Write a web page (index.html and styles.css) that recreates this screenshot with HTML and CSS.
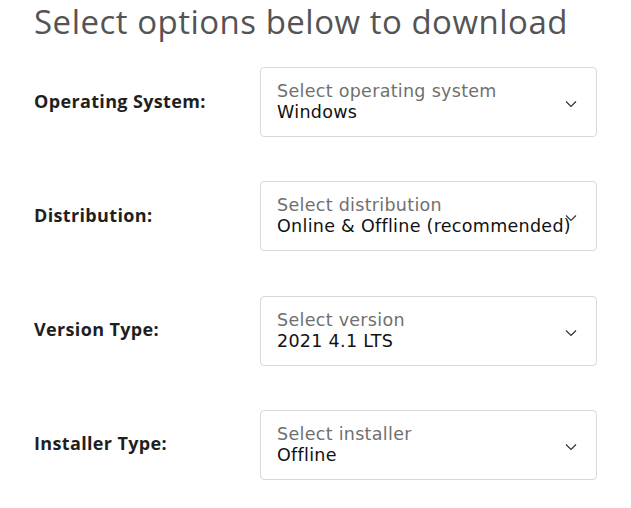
FILE: index.html
```html
<!DOCTYPE html>
<html lang="en">
<head>
<meta charset="utf-8">
<title>Select options</title>
<link rel="stylesheet" href="styles.css">
</head>
<body>
<div class="page">
  <h1 class="title">Select options below to download</h1>
  <div class="form">
    <div class="row">
      <div class="label">Operating System:</div>
      <div class="select">
        <div class="texts">
          <span class="ph">Select operating system</span>
          <span class="val">Windows</span>
        </div>
        <svg class="chev" width="12" height="8" viewBox="0 0 12 8"><path d="M1 1.5 L6 6.5 L11 1.5" fill="none" stroke="#333" stroke-width="1.2"/></svg>
      </div>
    </div>
    <div class="row">
      <div class="label">Distribution:</div>
      <div class="select">
        <div class="texts">
          <span class="ph">Select distribution</span>
          <span class="val">Online &amp; Offline (recommended)</span>
        </div>
        <svg class="chev" width="12" height="8" viewBox="0 0 12 8"><path d="M1 1.5 L6 6.5 L11 1.5" fill="none" stroke="#333" stroke-width="1.2"/></svg>
      </div>
    </div>
    <div class="row">
      <div class="label">Version Type:</div>
      <div class="select">
        <div class="texts">
          <span class="ph">Select version</span>
          <span class="val">2021 4.1 LTS</span>
        </div>
        <svg class="chev" width="12" height="8" viewBox="0 0 12 8"><path d="M1 1.5 L6 6.5 L11 1.5" fill="none" stroke="#333" stroke-width="1.2"/></svg>
      </div>
    </div>
    <div class="row">
      <div class="label">Installer Type:</div>
      <div class="select">
        <div class="texts">
          <span class="ph">Select installer</span>
          <span class="val">Offline</span>
        </div>
        <svg class="chev" width="12" height="8" viewBox="0 0 12 8"><path d="M1 1.5 L6 6.5 L11 1.5" fill="none" stroke="#333" stroke-width="1.2"/></svg>
      </div>
    </div>
  </div>
</div>
</body>
</html>
```
FILE: styles.css
```css
html, body {
  margin: 0;
  padding: 0;
  background: #fff;
}
body {
  font-family: "Open Sans", "Noto Sans", sans-serif;
}
.page {
  padding: 0 34px;
}
.title {
  margin: 0;
  font-size: 33px;
  letter-spacing: 0.5px;
  font-weight: 400;
  line-height: 44px;
  color: #545454;
}
.form {
  display: flex;
  flex-direction: column;
  gap: 44.33px;
  margin-top: 23px;
}
.row {
  display: grid;
  grid-template-columns: 226px 337px;
  align-items: center;
}
.label {
  font-size: 18px;
  letter-spacing: 0.35px;
  font-weight: 700;
  color: #1f1f1f;
  margin-top: -3px;
}
.select {
  position: relative;
  box-sizing: border-box;
  height: 70px;
  border: 1px solid #d9d9d9;
  border-radius: 4px;
  padding: 13px 16px 0 16px;
}
.texts {
  display: flex;
  flex-direction: column;
  font-family: "DejaVu Sans", "Open Sans", sans-serif;
  font-size: 17.5px;
  letter-spacing: 0.3px;
  line-height: 21px;
  white-space: nowrap;
}
.ph {
  color: #707070;
}
.val {
  color: #111;
}
.chev {
  position: absolute;
  right: 19px;
  top: 32px;
}
```
